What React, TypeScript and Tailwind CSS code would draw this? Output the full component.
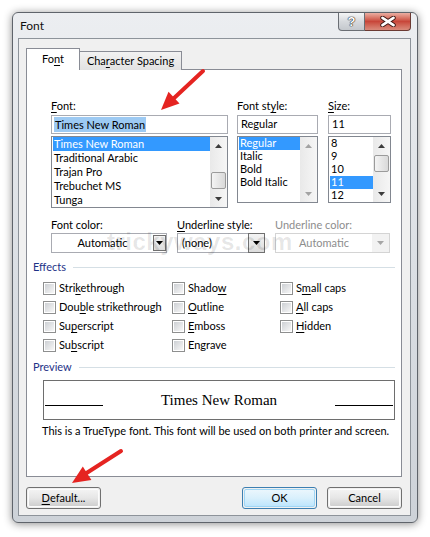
import React from "react";

// Word-style "Font" dialog in the Windows 7 look

const ui = "font-['Lato','Noto_Sans',sans-serif]";

function Key({ children }: { children: React.ReactNode }) {
  return <span className="underline decoration-1 underline-offset-[2px]">{children}</span>;
}

function Tri({ up = false, color = "#000" }: { up?: boolean; color?: string }) {
  return (
    <svg width="7" height="4" viewBox="0 0 7 4">
      <polygon points={up ? "0,4 7,4 3.5,0" : "0,0 7,0 3.5,4"} fill={color} />
    </svg>
  );
}

function ScrollBar({ spacer, thumb = true, disabled = false }: { spacer: string; thumb?: boolean; disabled?: boolean }) {
  const c = disabled ? "#a3a3a3" : "#3c3c3c";
  return (
    <div className="w-[17px] h-full flex flex-col bg-gradient-to-r from-[#e9e9e9] to-[#f6f6f6]">
      <div className="h-[17px] flex items-center justify-center">
        <Tri up color={c} />
      </div>
      <div className="flex-1 flex flex-col items-center">
        <div className={spacer} />
        {thumb && (
          <div className="w-[15px] h-[17px] rounded-[2px] border border-[#9b9b9b] bg-gradient-to-r from-[#f4f4f4] to-[#d9d9d9]" />
        )}
      </div>
      <div className="h-[17px] flex items-center justify-center">
        <Tri color={c} />
      </div>
    </div>
  );
}

function ListBox({
  items,
  selected,
  box,
  row,
  bar,
}: {
  items: string[];
  selected: number;
  box: string;
  row: string;
  bar: React.ReactNode;
}) {
  return (
    <div className={`${box} border border-[#828790] bg-white flex`}>
      <div className="flex-1 pl-[1px] overflow-hidden">
        {items.map((it, i) => (
          <div
            key={it}
            className={`${row} px-[1px] flex items-center whitespace-nowrap ${
              i === selected ? "bg-[#3399ff] text-white" : "text-black"
            }`}
          >
            {it}
          </div>
        ))}
      </div>
      {bar}
    </div>
  );
}

function CheckBox({ children }: { children: React.ReactNode }) {
  return (
    <div className="h-[19px] flex items-center gap-[3px]">
      <div className="w-[13px] h-[13px] border border-[#8e8f8f] bg-white p-[1px]">
        <div className="w-full h-full bg-gradient-to-br from-[#cdd0d4] to-[#f7f7f7]" />
      </div>
      <span>{children}</span>
    </div>
  );
}

function Button({ children, primary = false }: { children: React.ReactNode; primary?: boolean }) {
  return (
    <div
      className={`w-[75px] h-[22px] rounded-[3px] border ${
        primary ? "border-[#3c7fb1]" : "border-[#707070]"
      } p-[1px]`}
    >
      <div
        className={`h-full rounded-[2px] flex items-center justify-center ${
          primary
            ? "bg-gradient-to-b from-[#eaf6fd] via-[#d9f0fc] to-[#bee6fd] border border-[#9fd6f5]"
            : "bg-gradient-to-b from-[#f2f2f2] via-[#e6e6e6] to-[#cfcfcf] border border-[#fcfcfc]"
        }`}
      >
        {children}
      </div>
    </div>
  );
}

function GroupTitle({ title }: { title: string }) {
  return (
    <div className="h-[16px] pl-[6px] pr-[6px] flex items-center">
      <span className="text-[#1e3287]">{title}</span>
      <div className="flex-1 h-[1px] bg-[#d5dfe5] ml-[7px]" />
    </div>
  );
}

export default function App() {
  return (
    <div className={`${ui} text-[11px] text-black relative w-[430px] h-[537px] bg-white overflow-hidden pt-[12px] pl-[12px]`}>
      {/* window frame */}
      <div className="w-[406px] h-[511px] rounded-[6px] border border-[#5f646b] bg-gradient-to-b from-[#eceef1] via-[#dbdfe4] to-[#cdd2d8] shadow-[0_1px_9px_rgba(0,0,0,0.45)] flex flex-col">
        {/* title bar */}
        <div className="h-[25px] flex items-start">
          <div className="pl-[7px] pt-[1px] h-[25px] flex items-center flex-1 text-[12px] text-[#111]">Font</div>
          <div className="flex mr-[6px]">
            <div className="w-[27px] h-[18px] rounded-bl-[4px] border border-t-0 border-[#6a6e74] bg-gradient-to-b from-[#f4f5f6] via-[#d6d9dd] to-[#c4c8cd] flex items-center justify-center">
              <span className="font-['Liberation_Sans',sans-serif] font-bold text-[13px] leading-none text-white [text-shadow:0_0_1px_#222,0_0_1px_#222,0_0_1px_#222]">?</span>
            </div>
            <div className="w-[46px] h-[18px] rounded-br-[4px] border border-l-0 border-t-0 border-[#6b3a33] bg-gradient-to-b from-[#eaaea2] via-[#c8463a] to-[#d98b7c] flex items-center justify-center">
              <svg width="16" height="11" viewBox="0 0 16 11">
                <path d="M2.5 1.8 L13.5 9.2 M13.5 1.8 L2.5 9.2" stroke="#3a1612" strokeWidth="4.4" strokeLinecap="round" />
                <path d="M2.5 1.8 L13.5 9.2 M13.5 1.8 L2.5 9.2" stroke="#fff" strokeWidth="2.6" strokeLinecap="round" />
              </svg>
            </div>
          </div>
        </div>

        {/* client area */}
        <div className="ml-[5px] w-[393px] h-[478px] border border-[#8d939a] bg-[#f0f0f0] pt-[9px] pl-[7px]">
          {/* tabs */}
          <div className="flex items-end h-[22px] relative z-10">
            <div className="w-[54px] h-[22px] border border-b-0 border-[#898c95] bg-white flex items-center justify-center">
              Fo<Key>n</Key>t
            </div>
            <div className="w-[103px] -ml-px h-[19px] border border-b-0 border-[#898c95] bg-gradient-to-b from-[#f2f2f2] to-[#e2e2e2] flex items-center justify-center">
              Cha<Key>r</Key>acter Spacing
            </div>
          </div>

          {/* tab page */}
          <div className="-mt-px w-[376px] h-[408px] border border-[#898c95] bg-white pt-[28px]">
            <div className="flex pl-[24px] gap-[9px]">
              <div className="w-[177px]">
                <div className="h-[17px] leading-[16px]">
                  <Key>F</Key>ont:
                </div>
                <div className="h-[19px] border border-[#a9abb2] flex items-center pl-[2px]">
                  <span className="bg-[#9dcaf3] leading-[15px] px-[1px]">Times New Roman</span>
                </div>
                <div className="mt-[2px]">
                  <ListBox
                    items={["Times New Roman", "Traditional Arabic", "Trajan Pro", "Trebuchet MS", "Tunga"]}
                    selected={0}
                    box="w-[177px] h-[72px]"
                    row="h-[14px]"
                    bar={<ScrollBar spacer="h-[18px]" />}
                  />
                </div>
              </div>
              <div className="w-[81px]">
                <div className="h-[17px] leading-[16px]">
                  Font st<Key>y</Key>le:
                </div>
                <div className="h-[19px] border border-[#a9abb2] flex items-center pl-[3px]">Regular</div>
                <div className="mt-[2px]">
                  <ListBox
                    items={["Regular", "Italic", "Bold", "Bold Italic"]}
                    selected={0}
                    box="w-[81px] h-[67px]"
                    row="h-[13px]"
                    bar={<ScrollBar spacer="h-0" thumb={false} disabled />}
                  />
                </div>
              </div>
              <div className="w-[63px] ml-[1px]">
                <div className="h-[17px] leading-[16px]">
                  <Key>S</Key>ize:
                </div>
                <div className="h-[19px] border border-[#a9abb2] flex items-center pl-[3px]">11</div>
                <div className="mt-[2px]">
                  <ListBox
                    items={["8", "9", "10", "11", "12"]}
                    selected={3}
                    box="w-[63px] h-[67px]"
                    row="h-[13px]"
                    bar={<ScrollBar spacer="h-[1px]" />}
                  />
                </div>
              </div>
            </div>

            {/* colour / underline pickers */}
            <div className="flex pl-[24px] gap-[10px] mt-[9px]">
              <div className="w-[116px]">
                <div className="h-[16px] leading-[16px]">Font color:</div>
                <div className="h-[20px] border border-[#a9abb2] bg-white flex items-center">
                  <div className="flex-1 text-center">Automatic</div>
                  <div className="w-[13px] h-[16px] border border-[#707070] bg-gradient-to-b from-[#f4f4f4] to-[#dcdcdc] flex items-center justify-center">
                    <Tri />
                  </div>
                </div>
              </div>
              <div className="w-[88px]">
                <div className="h-[16px] leading-[16px]">
                  <Key>U</Key>nderline style:
                </div>
                <div className="h-[20px] border border-[#a9abb2] bg-white flex items-stretch">
                  <div className="flex-1 pl-[4px] flex items-center">(none)</div>
                  <div className="w-[17px] border border-[#707070] -my-px -mr-px bg-gradient-to-b from-[#f4f4f4] to-[#dcdcdc] flex items-center justify-center">
                    <Tri />
                  </div>
                </div>
              </div>
              <div className="w-[115px] text-[#8d8d8d]">
                <div className="h-[16px] leading-[16px]">Underline color:</div>
                <div className="h-[20px] border border-[#d4d4d4] bg-white flex items-stretch">
                  <div className="flex-1 flex items-center justify-center">Automatic</div>
                  <div className="w-[17px] bg-[#f2f2f2] flex items-center justify-center">
                    <Tri color="#a6a6a6" />
                  </div>
                </div>
              </div>
            </div>

            {/* effects */}
            <div className="mt-[6px]">
              <GroupTitle title="Effects" />
            </div>
            <div className="mt-[4px] pl-[16px] grid grid-cols-[129px_108px_1fr]">
              <div>
                <CheckBox>Stri<Key>k</Key>ethrough</CheckBox>
                <CheckBox>Dou<Key>b</Key>le strikethrough</CheckBox>
                <CheckBox>Su<Key>p</Key>erscript</CheckBox>
                <CheckBox>Su<Key>b</Key>script</CheckBox>
              </div>
              <div>
                <CheckBox>Shado<Key>w</Key></CheckBox>
                <CheckBox><Key>O</Key>utline</CheckBox>
                <CheckBox><Key>E</Key>mboss</CheckBox>
                <CheckBox>Engrave</CheckBox>
              </div>
              <div>
                <CheckBox>S<Key>m</Key>all caps</CheckBox>
                <CheckBox><Key>A</Key>ll caps</CheckBox>
                <CheckBox><Key>H</Key>idden</CheckBox>
              </div>
            </div>

            {/* preview */}
            <div className="mt-[4px]">
              <GroupTitle title="Preview" />
            </div>
            <div className="mt-[5px] ml-[16px] w-[352px] h-[40px] border border-[#6e6e6e] flex items-center justify-between px-px">
              <div className="w-[58px] h-[12px] flex items-end">
                <div className="w-full h-[1px] bg-black" />
              </div>
              <span className="font-['Liberation_Serif',serif] text-[15px] leading-[17px]">Times New Roman</span>
              <div className="w-[58px] h-[12px] flex items-end">
                <div className="w-full h-[1px] bg-black" />
              </div>
            </div>
            <div className="mt-[3px] pl-[15px] h-[16px] leading-[16px] whitespace-nowrap">
              This is a TrueType font. This font will be used on both printer and screen.
            </div>
          </div>

          {/* dialog buttons */}
          <div className="mt-[10px] w-[376px] flex">
            <Button>
              <span>
                <Key>D</Key>efault...
              </span>
            </Button>
            <div className="flex-1" />
            <Button primary>OK</Button>
            <div className="w-[10px]" />
            <Button>Cancel</Button>
          </div>
        </div>
      </div>

      {/* site watermark */}
      <div className="absolute left-[107px] top-[228px] font-['Liberation_Sans',sans-serif] font-bold text-[24px] leading-[28px] tracking-[0.5px] text-black/[0.1] pointer-events-none">
        trickyways.com
      </div>

      {/* red callout arrows */}
      <svg className="absolute left-0 top-0 pointer-events-none" width="430" height="537" viewBox="0 0 430 537">
        <line x1="203" y1="71" x2="172" y2="100" stroke="#e52421" strokeWidth="4" strokeLinecap="round" />
        <polygon points="161,110 168.5,91.8 179.5,103.4" fill="#e52421" />
        <line x1="121" y1="451" x2="85" y2="474" stroke="#e52421" strokeWidth="4" strokeLinecap="round" />
        <polygon points="72,483 82.8,466.5 91.4,479.9" fill="#e52421" />
      </svg>
    </div>
  );
}
